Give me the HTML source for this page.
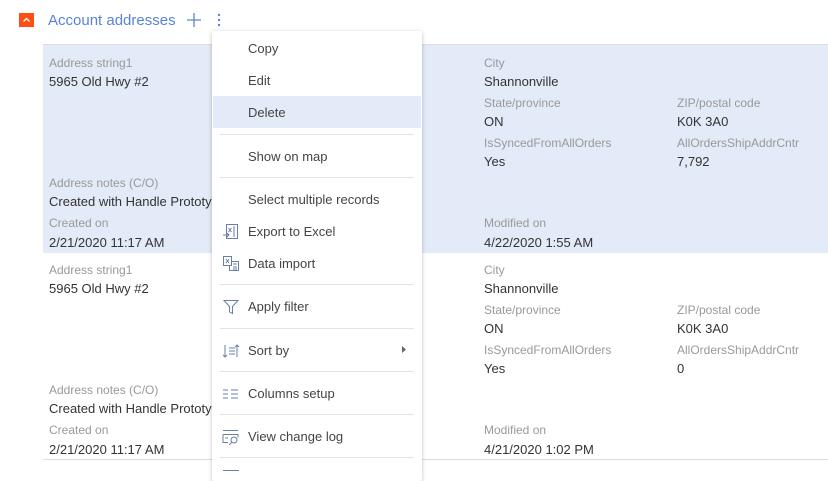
<!DOCTYPE html>
<html><head><meta charset="utf-8"><style>
body{margin:0;width:828px;height:473px;overflow:hidden;background:#fff;font-family:"Liberation Sans",sans-serif;position:relative}
.a{position:absolute;white-space:nowrap}
.l{font-size:12px;color:#999;margin-top:1px}
.v{font-size:13px;color:#333;margin-top:1px}
.m{font-size:13px;color:#444;margin-top:1px}
.sep{position:absolute;left:8px;width:194px;height:1px;background:#e4e4e4}
</style></head><body>
<div class="a" style="left:19px;top:13px;width:15px;height:14px;background:#ff4e12"></div>
<svg class="a" style="left:19px;top:13px" width="15" height="14"><path d="M4.5 8.5 L7.5 5.5 L10.5 8.5" stroke="#fff" stroke-width="1.3" fill="none"/></svg>
<div class="a" style="left:48px;top:12px;font-size:15px;color:#5a82d8">Account addresses</div>
<svg class="a" style="left:186px;top:12px" width="16" height="16"><path d="M8 1V15M1 8H15" stroke="#5a82d8" stroke-width="1.3"/></svg>
<svg class="a" style="left:216px;top:12px" width="6" height="16"><circle cx="3" cy="3" r="1.2" fill="#5a82d8"/><circle cx="3" cy="8" r="1.2" fill="#5a82d8"/><circle cx="3" cy="13" r="1.2" fill="#5a82d8"/></svg>
<div class="a" style="left:43px;top:44px;width:785px;height:208px;background:#e3eaf8;border-top:1px solid #d8dde6"></div>
<div class="a" style="left:43px;top:459px;width:785px;height:1px;background:#dcdcdc"></div>

<div class="a l" style="left:49px;top:55px">Address string1</div>
<div class="a v" style="left:49px;top:73px">5965 Old Hwy #2</div>
<div class="a l" style="left:484px;top:55px">City</div>
<div class="a v" style="left:484px;top:73px">Shannonville</div>
<div class="a l" style="left:484px;top:95px">State/province</div>
<div class="a v" style="left:484px;top:113px">ON</div>
<div class="a l" style="left:677px;top:95px">ZIP/postal code</div>
<div class="a v" style="left:677px;top:113px">K0K 3A0</div>
<div class="a l" style="left:484px;top:135px">IsSyncedFromAllOrders</div>
<div class="a v" style="left:484px;top:153px">Yes</div>
<div class="a l" style="left:677px;top:135px">AllOrdersShipAddrCntr</div>
<div class="a v" style="left:677px;top:153px">7,792</div>
<div class="a l" style="left:49px;top:175px">Address notes (C/O)</div>
<div class="a v" style="left:49px;top:193px">Created with Handle Prototype business process</div>
<div class="a l" style="left:49px;top:215px">Created on</div>
<div class="a v" style="left:49px;top:234px">2/21/2020 11:17 AM</div>
<div class="a l" style="left:484px;top:215px">Modified on</div>
<div class="a v" style="left:484px;top:234px">4/22/2020 1:55 AM</div>

<div class="a l" style="left:49px;top:262px">Address string1</div>
<div class="a v" style="left:49px;top:280px">5965 Old Hwy #2</div>
<div class="a l" style="left:484px;top:262px">City</div>
<div class="a v" style="left:484px;top:280px">Shannonville</div>
<div class="a l" style="left:484px;top:302px">State/province</div>
<div class="a v" style="left:484px;top:320px">ON</div>
<div class="a l" style="left:677px;top:302px">ZIP/postal code</div>
<div class="a v" style="left:677px;top:320px">K0K 3A0</div>
<div class="a l" style="left:484px;top:342px">IsSyncedFromAllOrders</div>
<div class="a v" style="left:484px;top:360px">Yes</div>
<div class="a l" style="left:677px;top:342px">AllOrdersShipAddrCntr</div>
<div class="a v" style="left:677px;top:360px">0</div>
<div class="a l" style="left:49px;top:382px">Address notes (C/O)</div>
<div class="a v" style="left:49px;top:400px">Created with Handle Prototype business process</div>
<div class="a l" style="left:49px;top:422px">Created on</div>
<div class="a v" style="left:49px;top:441px">2/21/2020 11:17 AM</div>
<div class="a l" style="left:484px;top:422px">Modified on</div>
<div class="a v" style="left:484px;top:441px">4/21/2020 1:02 PM</div>

<div class="a" style="left:212px;top:31px;width:210px;height:450px;background:#fff;box-shadow:0 1px 4px rgba(0,0,0,.25);border-radius:2px">
 <div class="a" style="left:1px;top:65px;width:208px;height:32px;background:#e3eaf8"></div>
 <div class="a m" style="left:36px;top:9px">Copy</div>
 <div class="a m" style="left:36px;top:41px">Edit</div>
 <div class="a m" style="left:36px;top:73px">Delete</div>
 <div class="sep" style="top:103px"></div>
 <div class="a m" style="left:36px;top:117px">Show on map</div>
 <div class="sep" style="top:146px"></div>
 <div class="a m" style="left:36px;top:160px">Select multiple records</div>
 <div class="a m" style="left:36px;top:192px">Export to Excel</div>
 <div class="a m" style="left:36px;top:224px">Data import</div>
 <div class="sep" style="top:253px"></div>
 <div class="a m" style="left:36px;top:267px">Apply filter</div>
 <div class="sep" style="top:297px"></div>
 <div class="a m" style="left:36px;top:311px">Sort by</div>
 <svg class="a" style="left:189px;top:314px" width="6" height="9"><path d="M1 1L5 4.5L1 8Z" fill="#666"/></svg>
 <div class="sep" style="top:340px"></div>
 <div class="a m" style="left:36px;top:354px">Columns setup</div>
 <div class="sep" style="top:383px"></div>
 <div class="a m" style="left:36px;top:397px">View change log</div>
 <div class="sep" style="top:426px"></div>
 <svg class="a" style="left:10px;top:192px" width="18" height="18" fill="none" stroke="#6a7fa8" stroke-width="1"><rect x="4.5" y="1.5" width="11" height="14"/><path d="M6.5 5l3 4M9.5 5l-3 4M12 3v11M1 12h6M5 10l2 2-2 2"/></svg>
 <svg class="a" style="left:10px;top:224px" width="18" height="18" fill="none" stroke="#6a7fa8" stroke-width="1"><rect x="1.5" y="1.5" width="8" height="9"/><path d="M4 4l3 4M7 4l-3 4M9.5 6.5h7v9h-9v-5M11 9h4M11 12h4M11 14h4"/></svg>
 <svg class="a" style="left:10px;top:267px" width="18" height="18" fill="none" stroke="#6a7fa8" stroke-width="1"><path d="M2 2.5h14l-5.5 6v7l-3-1.5v-5.5z"/></svg>
 <svg class="a" style="left:10px;top:311px" width="18" height="18" fill="none" stroke="#6a7fa8" stroke-width="1"><path d="M3 3v12M1 13l2 2 2-2M7 6h6M7 9h6M7 12h6M15 15V3M13 5l2-2 2 2"/></svg>
 <svg class="a" style="left:10px;top:354px" width="18" height="18" fill="none" stroke="#6a7fa8" stroke-width="1"><path d="M1 5h5M1 9h5M1 13h5M9 5h7M9 9h7M9 13h7"/></svg>
 <svg class="a" style="left:10px;top:397px" width="18" height="18" fill="none" stroke="#6a7fa8" stroke-width="1"><path d="M1 2.5h15M1 6.5h15v3M1 6.5v8h5M3 10h3"/><circle cx="12" cy="12" r="3"/><path d="M10 14l-3 3"/></svg>
 <svg class="a" style="left:10px;top:438px" width="18" height="10" fill="none" stroke="#6a7fa8"><path d="M1 1.5h16"/></svg>
</div>
</body></html>
